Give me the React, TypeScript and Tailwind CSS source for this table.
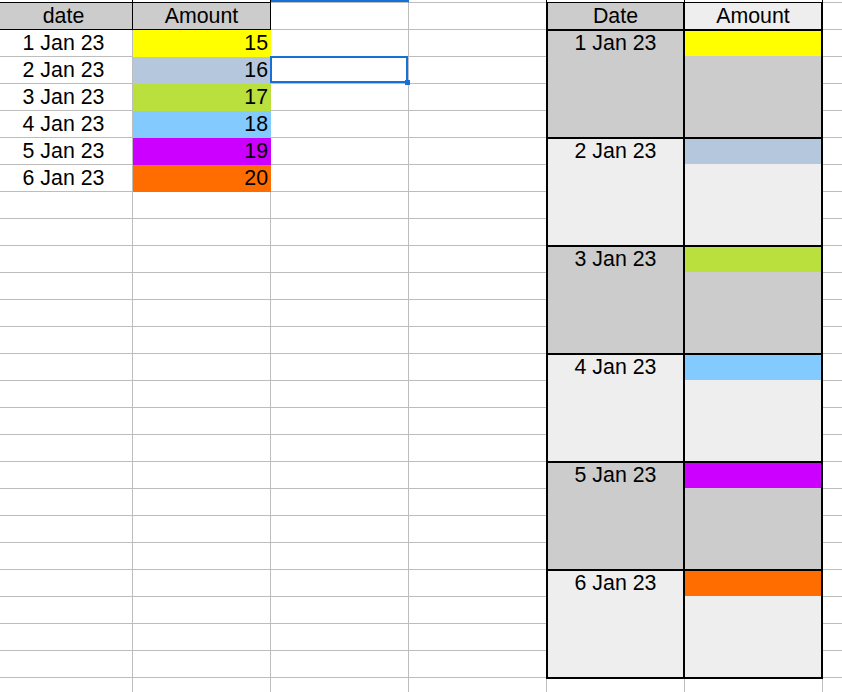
import React from "react";

type Row = { d: string; a: number; bg: string; bd: string };

const ROWS: Row[] = [
  { d: "1 Jan 23", a: 15, bg: "bg-[#ffff00]", bd: "border-[#ffff00]" },
  { d: "2 Jan 23", a: 16, bg: "bg-[#b4c7dc]", bd: "border-[#b4c7dc]" },
  { d: "3 Jan 23", a: 17, bg: "bg-[#b9e03c]", bd: "border-[#b9e03c]" },
  { d: "4 Jan 23", a: 18, bg: "bg-[#83caff]", bd: "border-[#83caff]" },
  { d: "5 Jan 23", a: 19, bg: "bg-[#cc00ff]", bd: "border-[#cc00ff]" },
  { d: "6 Jan 23", a: 20, bg: "bg-[#ff6d00]", bd: "border-[#ff6d00]" },
];

const EMPTY = 20;

function EmptyCells({ n, right = true }: { n: number; right?: boolean }) {
  return (
    <>
      {Array.from({ length: n }).map((_, i) => (
        <div
          key={i}
          className={
            right
              ? "h-[27px] shrink-0 border-r border-b border-[#bdbdbd]"
              : "h-[27px] shrink-0 border-b border-[#bdbdbd]"
          }
        />
      ))}
    </>
  );
}

export default function App() {
  return (
    <div className="w-[842px] h-[692px] overflow-hidden bg-white text-black font-['Liberation_Sans',Arial,sans-serif] text-[21.33px]">
      <div className="flex -ml-[5px] items-start">
        {/* Column A */}
        <div className="w-[138px] shrink-0 flex flex-col">
          <div className="h-[3px] border-r border-b border-black" />
          <div className="h-[27px] bg-[#cccccc] border-r border-b border-black text-center leading-[26px]">
            date
          </div>
          {ROWS.map((r) => (
            <div
              key={r.d}
              className="h-[27px] border-r border-b border-[#bdbdbd] text-center leading-[26px] whitespace-nowrap"
            >
              {r.d}
            </div>
          ))}
          <EmptyCells n={EMPTY} />
        </div>

        {/* Column B */}
        <div className="w-[138px] shrink-0 flex flex-col">
          <div className="h-[3px] border-r border-b border-black" />
          <div className="h-[27px] bg-[#cccccc] border-r border-b border-black text-center leading-[26px]">
            Amount
          </div>
          {ROWS.map((r) => (
            <div
              key={r.d}
              className={`h-[27px] border-r border-b ${r.bg} ${r.bd} text-right pr-[2px] leading-[26px]`}
            >
              {r.a}
            </div>
          ))}
          <EmptyCells n={EMPTY} />
        </div>

        {/* Column C */}
        <div className="w-[138px] shrink-0 flex flex-col">
          <div className="h-[3px] bg-[#1670d6] border-r border-b border-r-[#1670d6] border-b-[#bdbdbd]" />
          <div className="h-[27px] border-r border-b border-[#bdbdbd]" />
          <div className="h-[27px] border-r border-b border-[#bdbdbd]" />
          <div className="relative h-[27px] border-r border-b border-[#bdbdbd]">
            <div className="absolute -left-[1px] -top-[1px] right-0 bottom-0 border-2 border-[#1670d6]" />
            <div className="absolute -right-[2px] -bottom-[2px] w-[5px] h-[5px] bg-[#1670d6]" />
          </div>
          <EmptyCells n={EMPTY + 4} />
        </div>

        {/* Column D */}
        <div className="w-[137px] shrink-0 flex flex-col">
          <div className="h-[3px] border-b border-[#bdbdbd]" />
          <EmptyCells n={EMPTY + 6} right={false} />
        </div>

        {/* Right table region (columns E-F) */}
        <div className="w-[277px] shrink-0 flex flex-col">
          <div className="h-[2px] flex">
            <div className="w-[139px] border-l border-r border-black" />
            <div className="w-[138px] border-r border-black" />
          </div>
          <div className="border-t border-l-2 border-r-2 border-black">
            <div className="h-[28px] flex border-b-2 border-black">
              <div className="w-[137px] bg-[#cccccc] border-r-2 border-black text-center leading-[26px]">
                Date
              </div>
              <div className="flex-1 bg-[#eeeeee] text-center leading-[26px]">
                Amount
              </div>
            </div>
            {ROWS.map((r, i) => {
              const shade = i % 2 === 0 ? "bg-[#cccccc]" : "bg-[#eeeeee]";
              return (
                <div
                  key={r.d}
                  className={`h-[108px] flex border-b-2 border-black ${shade}`}
                >
                  <div className="w-[137px] border-r-2 border-black text-center leading-[24px] whitespace-nowrap">
                    {r.d}
                  </div>
                  <div className="flex-1 flex flex-col">
                    <div className={`h-[25px] ${r.bg}`} />
                  </div>
                </div>
              );
            })}
          </div>
          <div className="h-[30px] flex">
            <div className="w-[139px] border-l border-r border-[#bdbdbd]" />
            <div className="w-[138px] border-r border-[#bdbdbd]" />
          </div>
        </div>

        {/* Column G */}
        <div className="w-[138px] shrink-0 flex flex-col">
          <div className="h-[3px] border-r border-b border-[#bdbdbd]" />
          <EmptyCells n={EMPTY + 6} />
        </div>
      </div>
    </div>
  );
}
